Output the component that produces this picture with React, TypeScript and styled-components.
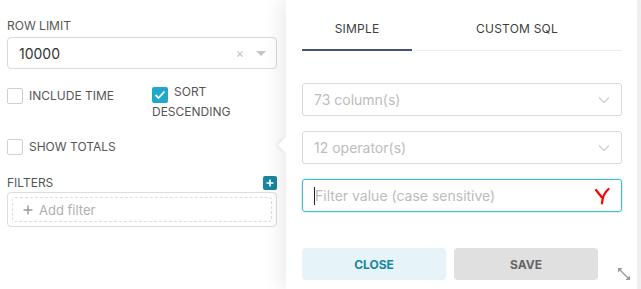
import styled, { createGlobalStyle } from 'styled-components';

const GlobalStyle = createGlobalStyle`
  html, body {
    margin: 0;
    padding: 0;
    background: #ffffff;
    font-family: Inter, "Noto Sans", sans-serif;
    overflow: hidden;
  }
`;

const Page = styled.div`
  display: flex;
  width: 641px;
  height: 289px;
  overflow: hidden;
  background: #f2f2f2;
`;

const Controls = styled.div`
  width: 270px;
  padding: 18px 10px 0 7px;
  background: #ffffff;
  display: flex;
  flex-direction: column;
  flex-shrink: 0;
`;

const Label = styled.div`
  font-size: 12px;
  color: #555555;
  text-transform: uppercase;
  line-height: 16px;
  margin-bottom: 3px;
`;

const SelectBox = styled.div`
  height: 32px;
  box-sizing: border-box;
  border: 1px solid #d9d9d9;
  border-radius: 4px;
  display: flex;
  align-items: center;
  padding: 0 10px 0 11px;
  font-size: 14px;
  color: #333333;
`;

const SelectValue = styled.span`
  flex: 1;
`;

const ClearMark = styled.span`
  color: #c4c4c4;
  font-size: 13px;
  margin-right: 12px;
`;

const Caret = styled.span`
  width: 0;
  height: 0;
  border-left: 5px solid transparent;
  border-right: 5px solid transparent;
  border-top: 5px solid #c4c4c4;
`;

const CheckRow = styled.div<{ $top: number }>`
  display: grid;
  grid-template-columns: 145px 1fr;
  margin-top: ${p => p.$top}px;
`;

const CheckItem = styled.div<{ $offset?: number }>`
  font-size: 12px;
  color: #555555;
  line-height: 18px;
  text-transform: uppercase;
  margin-top: ${p => p.$offset || 0}px;
`;

const Box = styled.span<{ $checked?: boolean }>`
  display: inline-flex;
  align-items: center;
  justify-content: center;
  vertical-align: -4px;
  width: 16px;
  height: 16px;
  box-sizing: border-box;
  border-radius: 2px;
  margin-right: 6px;
  border: ${p => (p.$checked ? 'none' : '1px solid #d0d0d0')};
  background: ${p => (p.$checked ? '#20a7c9' : '#ffffff')};
`;

const FilterHead = styled.div`
  display: flex;
  justify-content: space-between;
  align-items: center;
  margin-top: 19px;
  margin-bottom: 1px;
`;

const AddButton = styled.span`
  width: 14px;
  height: 14px;
  border-radius: 2px;
  background: #1a85a0;
  display: flex;
  align-items: center;
  justify-content: center;
`;

const FilterWell = styled.div`
  border: 1px solid #dddddd;
  border-radius: 4px;
  padding: 4px;
`;

const AddFilter = styled.div`
  border: 1px dashed #dddddd;
  border-radius: 3px;
  height: 23px;
  display: flex;
  align-items: center;
  gap: 6px;
  padding-left: 10px;
  font-size: 13px;
  color: #b0b0b0;
`;

const Popover = styled.div`
  position: relative;
  width: 351px;
  flex-shrink: 0;
  margin-left: -1px;
  background: #ffffff;
  box-shadow: -6px 0 18px rgba(0, 0, 0, 0.08);
  padding: 0 15px 0 16px;
  box-sizing: border-box;
  display: flex;
  flex-direction: column;
`;

const Arrow = styled.span`
  position: absolute;
  left: -6px;
  top: 140px;
  width: 10px;
  height: 10px;
  background: #ffffff;
  transform: rotate(45deg);
  box-shadow: -2px 2px 3px rgba(0, 0, 0, 0.05);
`;

const Tabs = styled.div`
  display: flex;
  margin-top: 19px;
  border-bottom: 1px solid #eeeeee;
`;

const Tab = styled.div<{ $active?: boolean; $width: number }>`
  width: ${p => p.$width}px;
  text-align: center;
  font-size: 12px;
  letter-spacing: 0.2px;
  color: #3d3d3d;
  line-height: 20px;
  padding-bottom: 10px;
  margin-bottom: -1px;
  border-bottom: 2px solid ${p => (p.$active ? '#484f79' : 'transparent')};
`;

const Fields = styled.div`
  display: flex;
  flex-direction: column;
  gap: 15px;
  margin-top: 32px;
`;

const Field = styled.div<{ $focus?: boolean }>`
  height: 33px;
  box-sizing: border-box;
  border: 1px solid ${p => (p.$focus ? '#3fb9d6' : '#d9d9d9')};
  box-shadow: ${p => (p.$focus ? '0 0 2px rgba(32, 167, 201, 0.5)' : 'none')};
  border-radius: 3px;
  display: flex;
  align-items: center;
  padding: 0 11px 0 11px;
  font-size: 14px;
  color: #bcbcbc;
`;

const FieldText = styled.span`
  flex: 1;
`;

const Cursor = styled.span`
  display: inline-block;
  width: 1px;
  height: 18px;
  background: #222222;
  vertical-align: -4px;
`;

const Buttons = styled.div`
  display: flex;
  align-items: center;
  margin-top: 35px;
`;

const Button = styled.div<{ $primary?: boolean }>`
  width: 144px;
  height: 32px;
  flex-shrink: 0;
  margin-right: 8px;
  border-radius: 4px;
  display: flex;
  align-items: center;
  justify-content: center;
  font-size: 12px;
  font-weight: 700;
  background: ${p => (p.$primary ? '#e6f4f9' : '#e0e0e0')};
  color: ${p => (p.$primary ? '#1a85a0' : '#666666')};
`;

const Resize = styled.span`
  margin-left: 11px;
  margin-top: 20px;
  flex-shrink: 0;
  display: flex;
`;

const Chevron = () => (
  <svg width="12" height="8" viewBox="0 0 12 8">
    <path d="M1 1.5 L6 6.5 L11 1.5" fill="none" stroke="#cccccc" strokeWidth="1.2" />
  </svg>
);

export default function App() {
  return (
    <>
      <GlobalStyle />
      <Page>
        <Controls>
          <Label>Row limit</Label>
          <SelectBox>
            <SelectValue>10000</SelectValue>
            <ClearMark>×</ClearMark>
            <Caret />
          </SelectBox>

          <CheckRow $top={14}>
            <CheckItem $offset={4}>
              <Box />
              Include time
            </CheckItem>
            <CheckItem>
              <Box $checked>
                <svg width="12" height="10" viewBox="0 0 12 10">
                  <path d="M1.5 5 L4.5 8 L10.5 1.5" fill="none" stroke="#ffffff" strokeWidth="1.8" />
                </svg>
              </Box>
              Sort descending
            </CheckItem>
          </CheckRow>

          <CheckRow $top={17}>
            <CheckItem>
              <Box />
              Show totals
            </CheckItem>
          </CheckRow>

          <FilterHead>
            <Label style={{ marginBottom: 0 }}>Filters</Label>
            <AddButton>
              <svg width="8" height="8" viewBox="0 0 8 8">
                <path d="M4 0.5 V7.5 M0.5 4 H7.5" stroke="#ffffff" strokeWidth="1.6" />
              </svg>
            </AddButton>
          </FilterHead>
          <FilterWell>
            <AddFilter>
              <svg width="10" height="10" viewBox="0 0 10 10">
                <path d="M5 0.5 V9.5 M0.5 5 H9.5" stroke="#999999" strokeWidth="1.4" />
              </svg>
              Add filter
            </AddFilter>
          </FilterWell>
        </Controls>

        <Popover>
          <Arrow />
          <Tabs>
            <Tab $active $width={110}>SIMPLE</Tab>
            <Tab $width={210}>CUSTOM SQL</Tab>
          </Tabs>

          <Fields>
            <Field>
              <FieldText>73 column(s)</FieldText>
              <Chevron />
            </Field>
            <Field>
              <FieldText>12 operator(s)</FieldText>
              <Chevron />
            </Field>
            <Field $focus>
              <FieldText>
                <Cursor />
                Filter value (case sensitive)
              </FieldText>
              <svg width="16" height="18" viewBox="0 0 16 18">
                <path d="M2 3 L7.5 10 M14.5 2 C11 5 8.5 9 8 16.5" fill="none" stroke="#ff0000" strokeWidth="2.2" strokeLinecap="round" />
              </svg>
            </Field>
          </Fields>

          <Buttons>
            <Button $primary>CLOSE</Button>
            <Button>SAVE</Button>
            <Resize>
              <svg width="14" height="14" viewBox="0 0 14 14">
                <path d="M3 3 L11 11" stroke="#999999" strokeWidth="1.3" />
                <path d="M1 1 H5.5 L1 5.5 Z" fill="#999999" />
                <path d="M13 13 H8.5 L13 8.5 Z" fill="#999999" />
              </svg>
            </Resize>
          </Buttons>
        </Popover>
      </Page>
    </>
  );
}
